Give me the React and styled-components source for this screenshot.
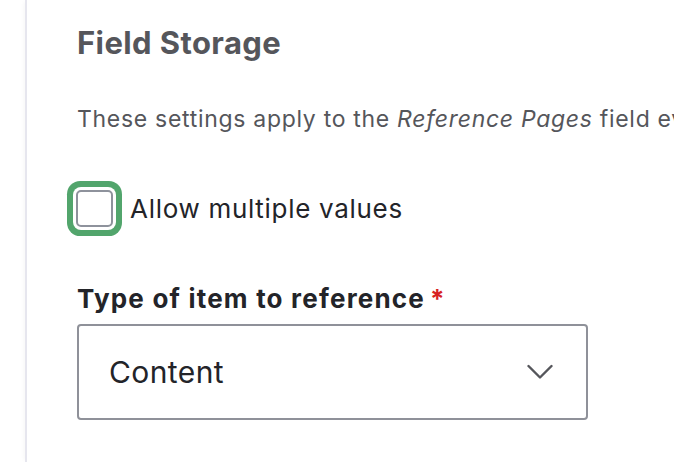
import React from "react";
import styled, { createGlobalStyle } from "styled-components";

const Global = createGlobalStyle`
  html, body { margin: 0; padding: 0; background: #ffffff; }
  body { font-family: Inter, "Noto Sans", "Liberation Sans", sans-serif; }
  * { box-sizing: border-box; }
`;

const Page = styled.div`
  height: 462px;
  padding-left: 25px;
  overflow: hidden;
  background: #ffffff;
`;

const Panel = styled.section`
  height: 100%;
  border-left: 2px solid #e6e6ee;
  box-shadow: -3px 0 4px -2px rgba(0, 0, 0, 0.04);
  padding: 25px 0 0 50px;
  display: flex;
  flex-direction: column;
  white-space: nowrap;
`;

const Title = styled.h2`
  margin: 0;
  font-size: 31px;
  line-height: 36px;
  font-weight: 700;
  color: #55565b;
  letter-spacing: 0.4px;
`;

const Description = styled.p`
  margin: 45px 0 0;
  font-size: 23px;
  line-height: 26px;
  color: #55565b;
  letter-spacing: 0.7px;
`;

const CheckRow = styled.label`
  display: flex;
  align-items: center;
  gap: 17px;
  margin-top: 58px;
  margin-left: -1px;
`;

const Box = styled.span`
  width: 37px;
  height: 37px;
  flex: none;
  border: 2px solid #8e929c;
  border-radius: 5px;
  background: #ffffff;
  box-shadow: 0 0 0 3px #ffffff, 0 0 0 9px #52a56c;
`;

const CheckText = styled.span`
  font-size: 26px;
  line-height: 30px;
  color: #232429;
  letter-spacing: 0.7px;
`;

const FieldLabel = styled.div`
  display: flex;
  align-items: flex-start;
  gap: 5px;
  margin-top: 57px;
  font-size: 26px;
  line-height: 30px;
  font-weight: 700;
  color: #232429;
  letter-spacing: 1.2px;
`;

const Required = styled.span`
  color: #d72222;
  font-size: 26px;
  line-height: 30px;
  font-weight: 700;
`;

const Select = styled.div`
  margin-top: 10px;
  width: 511px;
  height: 96px;
  border: 2px solid #8f9199;
  border-radius: 4px;
  display: flex;
  align-items: center;
  justify-content: space-between;
  padding: 0 33px 0 30px;
`;

const SelectValue = styled.span`
  font-size: 30px;
  line-height: 36px;
  color: #232429;
  letter-spacing: 0.4px;
`;

const Chevron = () => (
  <svg width="26" height="16" viewBox="0 0 26 16" fill="none">
    <path d="M1.5 2 L13 13.5 L24.5 2" stroke="#55565b" strokeWidth="2.4" strokeLinecap="round" strokeLinejoin="round" />
  </svg>
);

export default function App() {
  return (
    <Page>
      <Global />
      <Panel>
        <Title>Field Storage</Title>
        <Description>
          These settings apply to the <em>Reference Pages</em> field everywhere it is used.
        </Description>
        <CheckRow>
          <Box />
          <CheckText>Allow multiple values</CheckText>
        </CheckRow>
        <FieldLabel>
          Type of item to reference<Required>*</Required>
        </FieldLabel>
        <Select>
          <SelectValue>Content</SelectValue>
          <Chevron />
        </Select>
      </Panel>
    </Page>
  );
}
